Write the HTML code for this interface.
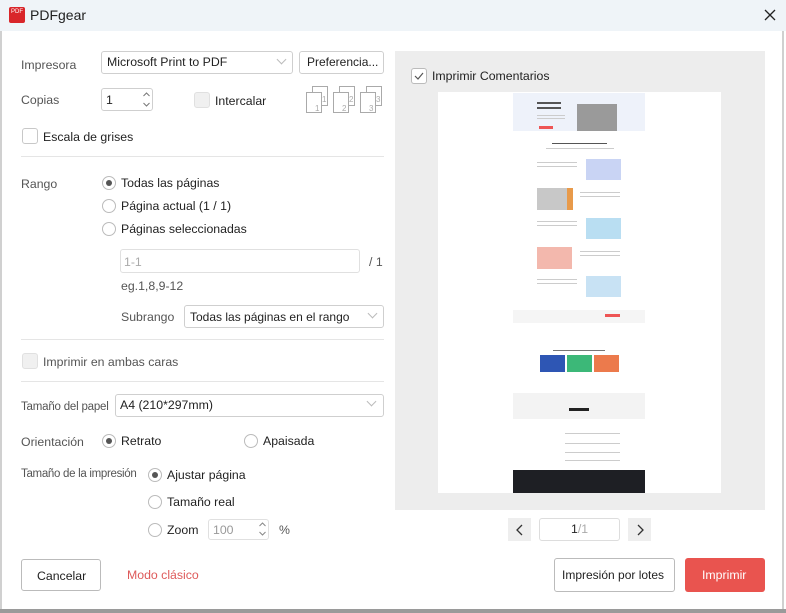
<!DOCTYPE html>
<html><head><meta charset="utf-8"><style>
*{box-sizing:border-box;margin:0;padding:0}
body{width:786px;height:613px;background:#fff;font-family:"Liberation Sans",sans-serif;font-size:12.3px;color:#222;position:relative;overflow:hidden}
.a{position:absolute}
.t{position:absolute;white-space:nowrap}
.box{position:absolute;border:1px solid #cfcfcf;border-radius:3px;background:#fff}
.rad{position:absolute;width:14px;height:14px;border:1px solid #bbb;border-radius:50%;background:#fff}
.rad.on::after{content:"";position:absolute;left:3px;top:3px;width:6px;height:6px;border-radius:50%;background:#555}
.cb{position:absolute;width:16px;height:16px;border:1px solid #c8c8c8;border-radius:3px;background:#fff}
.hr{position:absolute;left:21px;width:363px;height:1px;background:#e5e5e5}
.chev{position:absolute;width:7px;height:7px;border-right:1px solid #bbb;border-bottom:1px solid #bbb;transform:rotate(45deg)}
.g{color:#555}
.ln{position:absolute;height:1px;background:#ccc}
</style></head><body>
<div class="a" style="left:0;top:0;width:786px;height:31px;background:#eff4f8"></div>
<div class="a" style="left:9px;top:7px;width:16px;height:16px;background:#d9262a;border-radius:2px"></div>
<div class="t" style="left:11px;top:9px;font-size:6px;color:#fff">PDF</div>
<div class="t" style="left:30px;top:7px;font-size:14px">PDFgear</div>
<svg class="a" style="left:764px;top:9px" width="12" height="12"><path d="M1 1L11 11M11 1L1 11" stroke="#222" stroke-width="1.3"/></svg>
<div class="a" style="left:0;top:31px;width:2px;height:580px;background:#d0d0d0"></div>
<div class="a" style="left:782px;top:31px;width:2px;height:580px;background:#d0d0d0"></div>
<div class="a" style="left:0;top:609px;width:786px;height:4px;background:#9a9a9a"></div>

<div class="t g" style="left:21px;top:58px">Impresora</div>
<div class="box" style="left:101px;top:51px;width:192px;height:23px"></div>
<div class="t" style="left:107px;top:55px">Microsoft Print to PDF</div>
<div class="chev" style="left:278px;top:56px"></div>
<div class="box" style="left:299px;top:51px;width:85px;height:23px"></div>
<div class="t" style="left:307px;top:55px;font-size:12px">Preferencia...</div>

<div class="t g" style="left:21px;top:93px">Copias</div>
<div class="box" style="left:101px;top:88px;width:52px;height:23px"></div>
<div class="t" style="left:106px;top:93px">1</div>
<svg class="a" style="left:142px;top:91px" width="9" height="18"><path d="M1.5 5L4.5 2L7.5 5M1.5 12L4.5 15L7.5 12" stroke="#777" fill="none"/></svg>
<div class="cb" style="left:194px;top:92px;background:#f0f0f0;border-color:#e0e0e0"></div>
<div class="t" style="left:215px;top:94px">Intercalar</div>
<svg class="a" style="left:305px;top:86px" width="80" height="28" fill="#fff" stroke="#aaa" stroke-width="1">
<rect x="7.5" y="0.5" width="15" height="19"/><rect x="1.5" y="6.5" width="15" height="20"/><text x="17" y="16" font-size="8" fill="#aaa" stroke="none">1</text><text x="10" y="25" font-size="8" fill="#aaa" stroke="none">1</text>
<rect x="34.5" y="0.5" width="15" height="19"/><rect x="28.5" y="6.5" width="15" height="20"/><text x="44" y="16" font-size="8" fill="#aaa" stroke="none">2</text><text x="37" y="25" font-size="8" fill="#aaa" stroke="none">2</text>
<rect x="61.5" y="0.5" width="15" height="19"/><rect x="55.5" y="6.5" width="15" height="20"/><text x="71" y="16" font-size="8" fill="#aaa" stroke="none">3</text><text x="64" y="25" font-size="8" fill="#aaa" stroke="none">3</text>
</svg>
<div class="cb" style="left:22px;top:128px"></div>
<div class="t" style="left:43px;top:130px">Escala de grises</div>
<div class="hr" style="top:156px"></div>

<div class="t g" style="left:21px;top:177px">Rango</div>
<div class="rad on" style="left:102px;top:176px"></div><div class="t" style="left:121px;top:176px">Todas las páginas</div>
<div class="rad" style="left:102px;top:199px"></div><div class="t" style="left:121px;top:199px">Página actual (1 / 1)</div>
<div class="rad" style="left:102px;top:222px"></div><div class="t" style="left:121px;top:222px">Páginas seleccionadas</div>
<div class="box" style="left:120px;top:249px;width:240px;height:24px;border-color:#e0e0e0"></div>
<div class="t" style="left:124px;top:255px;color:#aaa">1-1</div>
<div class="t g" style="left:369px;top:255px">/ 1</div>
<div class="t g" style="left:121px;top:279px">eg.1,8,9-12</div>
<div class="t g" style="left:121px;top:310px">Subrango</div>
<div class="box" style="left:184px;top:305px;width:200px;height:23px"></div>
<div class="t" style="left:190px;top:310px;font-size:12px">Todas las páginas en el rango</div>
<div class="chev" style="left:369px;top:310px"></div>
<div class="hr" style="top:339px"></div>
<div class="cb" style="left:22px;top:353px;background:#f0f0f0;border-color:#e0e0e0"></div>
<div class="t g" style="left:43px;top:355px">Imprimir en ambas caras</div>
<div class="hr" style="top:381px"></div>

<div class="t g" style="left:21px;top:401px;font-size:11.5px;letter-spacing:-0.2px">Tamaño del papel</div>
<div class="box" style="left:115px;top:394px;width:269px;height:23px"></div>
<div class="t" style="left:120px;top:398px">A4 (210*297mm)</div>
<div class="chev" style="left:368px;top:398px"></div>
<div class="t g" style="left:21px;top:435px">Orientación</div>
<div class="rad on" style="left:102px;top:434px"></div><div class="t" style="left:121px;top:434px">Retrato</div>
<div class="rad" style="left:244px;top:434px"></div><div class="t" style="left:263px;top:434px">Apaisada</div>
<div class="t g" style="left:21px;top:468px;font-size:11.5px;letter-spacing:-0.3px">Tamaño de la impresión</div>
<div class="rad on" style="left:148px;top:468px"></div><div class="t" style="left:167px;top:468px">Ajustar página</div>
<div class="rad" style="left:148px;top:495px"></div><div class="t" style="left:167px;top:495px">Tamaño real</div>
<div class="rad" style="left:148px;top:523px"></div><div class="t" style="left:167px;top:523px">Zoom</div>
<div class="box" style="left:208px;top:519px;width:61px;height:21px;border-color:#e0e0e0"></div>
<div class="t" style="left:213px;top:523px;color:#999">100</div>
<svg class="a" style="left:258px;top:521px" width="9" height="17"><path d="M1.5 5L4.5 2L7.5 5M1.5 11L4.5 14L7.5 11" stroke="#888" fill="none"/></svg>
<div class="t g" style="left:279px;top:523px">%</div>

<div class="box" style="left:21px;top:559px;width:80px;height:32px;border-color:#bbb"></div>
<div class="t" style="left:37px;top:569px">Cancelar</div>
<div class="t" style="left:127px;top:568px;color:#de5a5a">Modo clásico</div>

<div class="a" style="left:395px;top:51px;width:370px;height:459px;background:#ededed"></div>
<div class="cb" style="left:411px;top:68px;border-color:#bbb"></div>
<svg class="a" style="left:413px;top:70px" width="12" height="12"><path d="M2 6L5 9L10 3" stroke="#555" fill="none" stroke-width="1.2"/></svg>
<div class="t" style="left:432px;top:69px">Imprimir Comentarios</div>
<div class="a" style="left:438px;top:92px;width:283px;height:401px;background:#fff"></div>
<div class="a" style="left:513px;top:93px;width:132px;height:38px;background:#eef2fa"></div>
<div class="ln" style="left:537px;top:102px;width:24px;height:2px;background:#555"></div>
<div class="ln" style="left:537px;top:107px;width:24px;height:2px;background:#555"></div>
<div class="ln" style="left:537px;top:115px;width:28px"></div>
<div class="ln" style="left:537px;top:118px;width:28px"></div>
<div class="a" style="left:577px;top:104px;width:40px;height:27px;background:#9a9a9a"></div>
<div class="a" style="left:539px;top:126px;width:14px;height:3px;background:#e55"></div>
<div class="ln" style="left:552px;top:143px;width:55px;background:#555"></div>
<div class="ln" style="left:546px;top:148px;width:68px"></div>
<div class="ln" style="left:537px;top:162px;width:40px"></div><div class="ln" style="left:537px;top:166px;width:40px"></div>
<div class="a" style="left:586px;top:159px;width:35px;height:21px;background:#c9d4f4"></div>
<div class="a" style="left:537px;top:188px;width:35px;height:22px;background:#c8c8c8"></div>
<div class="a" style="left:567px;top:188px;width:6px;height:22px;background:#e89a4a"></div>
<div class="ln" style="left:580px;top:192px;width:40px"></div><div class="ln" style="left:580px;top:196px;width:40px"></div>
<div class="ln" style="left:537px;top:221px;width:40px"></div><div class="ln" style="left:537px;top:225px;width:40px"></div>
<div class="a" style="left:586px;top:218px;width:35px;height:21px;background:#b9def2"></div>
<div class="a" style="left:537px;top:247px;width:35px;height:22px;background:#f3b8ad"></div>
<div class="ln" style="left:580px;top:251px;width:40px"></div><div class="ln" style="left:580px;top:255px;width:40px"></div>
<div class="ln" style="left:537px;top:279px;width:40px"></div><div class="ln" style="left:537px;top:283px;width:40px"></div>
<div class="a" style="left:586px;top:276px;width:35px;height:21px;background:#c8e2f4"></div>
<div class="a" style="left:513px;top:310px;width:132px;height:13px;background:#f5f5f5"></div>
<div class="a" style="left:605px;top:314px;width:15px;height:3px;background:#e55"></div>
<div class="ln" style="left:553px;top:350px;width:52px;background:#777"></div>
<div class="a" style="left:540px;top:355px;width:25px;height:17px;background:#2e56b4"></div>
<div class="a" style="left:567px;top:355px;width:25px;height:17px;background:#3cb878"></div>
<div class="a" style="left:594px;top:355px;width:25px;height:17px;background:#ec7a4c"></div>
<div class="a" style="left:513px;top:393px;width:132px;height:26px;background:#f3f3f3"></div>
<div class="a" style="left:569px;top:408px;width:20px;height:3px;background:#222"></div>
<div class="ln" style="left:565px;top:433px;width:55px"></div><div class="ln" style="left:565px;top:443px;width:55px"></div><div class="ln" style="left:565px;top:452px;width:55px"></div><div class="ln" style="left:565px;top:460px;width:55px"></div>
<div class="a" style="left:513px;top:470px;width:132px;height:23px;background:#1e1f24"></div>

<div class="a" style="left:508px;top:518px;width:23px;height:23px;background:#eee"></div>
<svg class="a" style="left:514px;top:524px" width="12" height="12"><path d="M8 1L3 6L8 11" stroke="#333" fill="none" stroke-width="1.3"/></svg>
<div class="box" style="left:539px;top:518px;width:81px;height:23px;border-color:#ddd"></div>
<div class="t" style="left:571px;top:522px">1<span style="color:#aaa">/1</span></div>
<div class="a" style="left:628px;top:518px;width:23px;height:23px;background:#eee"></div>
<svg class="a" style="left:634px;top:524px" width="12" height="12"><path d="M4 1L9 6L4 11" stroke="#333" fill="none" stroke-width="1.3"/></svg>

<div class="box" style="left:554px;top:558px;width:121px;height:34px;border-color:#bbb"></div>
<div class="t" style="left:562px;top:568px;font-size:12px">Impresión por lotes</div>
<div class="a" style="left:685px;top:558px;width:80px;height:34px;background:#e9544f;border-radius:3px"></div>
<div class="t" style="left:702px;top:568px;color:#fff">Imprimir</div>
</body></html>
